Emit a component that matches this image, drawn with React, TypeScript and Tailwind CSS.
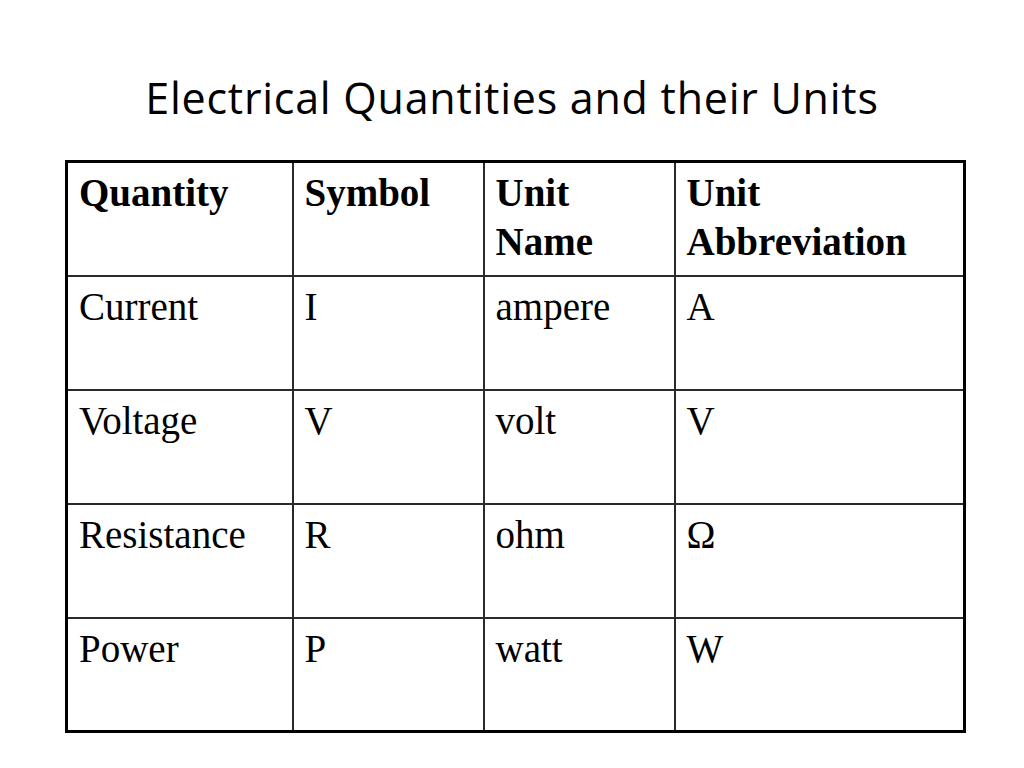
import React from 'react';

interface Row {
  quantity: string;
  symbol: string;
  unit: string;
  abbr: string;
}

const rows: Row[] = [
  { quantity: 'Current', symbol: 'I', unit: 'ampere', abbr: 'A' },
  { quantity: 'Voltage', symbol: 'V', unit: 'volt', abbr: 'V' },
  { quantity: 'Resistance', symbol: 'R', unit: 'ohm', abbr: 'Ω' },
  { quantity: 'Power', symbol: 'P', unit: 'watt', abbr: 'W' },
];

const cell = 'border-2 border-[#2a2a2a] align-top pl-[11px] pr-[10px] pt-[5px] leading-[49px]';

export default function App() {
  return (
    <div className="w-[1024px] h-[768px] bg-white text-black flex flex-col">
      <h1 className="self-center mt-[70px] text-[43px] leading-[56px] font-['Open_Sans',sans-serif] font-normal tracking-[0.75px]">
        Electrical Quantities and their Units
      </h1>

      <table className="ml-[65px] mt-[34px] border-collapse border-[3px] border-black font-['Liberation_Serif',serif] text-[39px] table-fixed w-[898px]">
        <colgroup>
          <col className="w-[226px]" />
          <col className="w-[191px]" />
          <col className="w-[191px]" />
          <col className="w-[290px]" />
        </colgroup>
        <thead>
          <tr className="h-[114px]">
            <th className={`${cell} text-left font-bold`}>Quantity</th>
            <th className={`${cell} text-left font-bold`}>Symbol</th>
            <th className={`${cell} text-left font-bold`}>Unit Name</th>
            <th className={`${cell} text-left font-bold`}>Unit Abbreviation</th>
          </tr>
        </thead>
        <tbody>
          {rows.map((r) => (
            <tr key={r.quantity} className="h-[114px]">
              <td className={cell}>{r.quantity}</td>
              <td className={cell}>{r.symbol}</td>
              <td className={cell}>{r.unit}</td>
              <td className={cell}>{r.abbr}</td>
            </tr>
          ))}
        </tbody>
      </table>
    </div>
  );
}
